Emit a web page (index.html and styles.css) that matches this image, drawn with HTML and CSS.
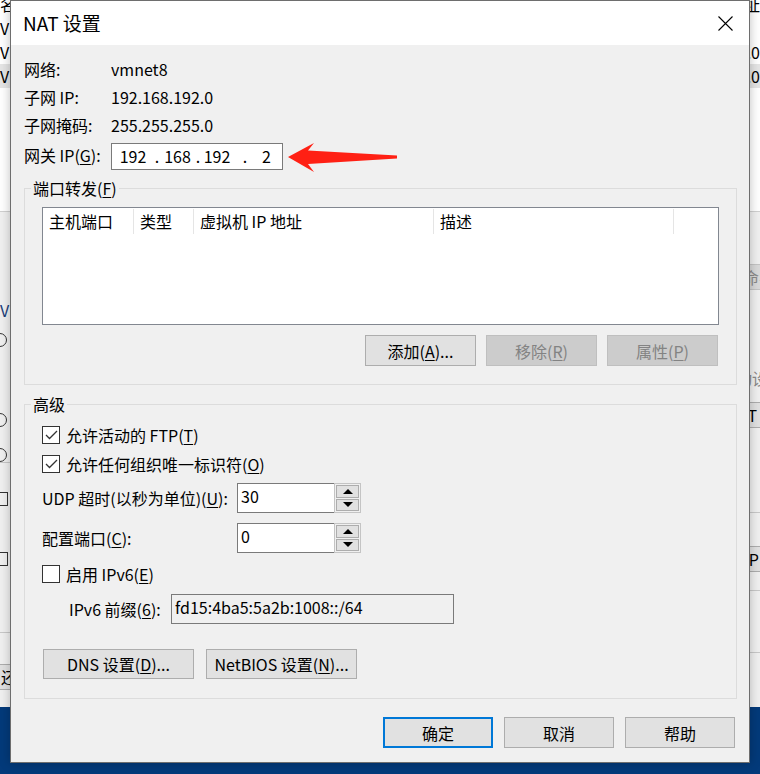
FILE: index.html
```html
<!DOCTYPE html>
<html>
  <head>
    <meta charset="UTF-8" />
    <title>NAT 设置</title>
    <link rel="stylesheet" href="styles.css">
  </head>
  <body>
    <div class="desktop">
      <!-- the network editor window behind, only its edges show -->
      <div class="strip strip-left">
        <div class="strip-in">
          <div class="bw-top">
            <div class="bw-list">
              <div class="bw-row">名称</div>
              <div class="bw-row">VMnet0</div>
              <div class="bw-row">VMnet1</div>
              <div class="bw-row sel">VMnet8</div>
            </div>
          </div>
          <div class="bw-bottom">
            <div class="bw-text bw-vm">VMnet</div>
            <div class="bw-radio r1"></div>
            <div class="bw-radio r2"></div>
            <div class="bw-radio r3"></div>
            <div class="bw-box b1"></div>
            <div class="bw-box b2"></div>
            <div class="bw-line l1"></div>
            <div class="bw-line l2"></div>
            <div class="bw-btn restore">还原</div>
          </div>
        </div>
      </div>
      <div class="strip strip-right">
        <div class="strip-in">
          <div class="bw-top">
            <div class="bw-list right">
              <div class="bw-row">地址</div>
              <div class="bw-row"></div>
              <div class="bw-row">10.0</div>
              <div class="bw-row sel">92.0</div>
            </div>
          </div>
          <div class="bw-bottom">
            <div class="bw-btn rename">重命名</div>
            <div class="bw-text auto">自动设</div>
            <div class="bw-btn nat">NAT</div>
            <div class="bw-line l3"></div>
            <div class="bw-btn dhcp">DHCP</div>
            <div class="bw-line l4"></div>
            <div class="bw-line l5"></div>
          </div>
        </div>
      </div>
      <div class="taskbar"></div>

      <div class="dialog">
        <div class="titlebar">
          <span class="title">NAT 设置</span>
          <svg class="close" width="15" height="15" viewBox="0 0 15 15">
            <path d="M0.5 0.5 L14.5 14.5 M14.5 0.5 L0.5 14.5" stroke="#000" stroke-width="1.1" fill="none" />
          </svg>
        </div>

        <div class="content">
          <div class="info-row"><span class="info-label">网络:</span><span>vmnet8</span></div>
          <div class="info-row"><span class="info-label">子网 IP:</span><span>192.168.192.0</span></div>
          <div class="info-row"><span class="info-label">子网掩码:</span><span>255.255.255.0</span></div>
          <div class="info-row gw-row">
            <span class="info-label">网关 IP(<u>G</u>):</span>
            <div class="ip-box">
              <span class="oct o1">192</span><span class="dot d1">.</span>
              <span class="oct o2">168</span><span class="dot d2">.</span>
              <span class="oct o3">192</span><span class="dot d3">.</span>
              <span class="oct o4">2</span>
            </div>
          </div>

          <fieldset class="group ports">
            <legend>端口转发(<u>F</u>)</legend>
            <div class="group-body">
              <div class="listview">
                <div class="lv-head">
                  <span class="lv-col c1">主机端口</span>
                  <span class="lv-col c2">类型</span>
                  <span class="lv-col c3">虚拟机 IP 地址</span>
                  <span class="lv-col c4">描述</span>
                </div>
              </div>
              <div class="btn-row">
                <button class="btn">添加(<u>A</u>)...</button>
                <button class="btn" disabled>移除(<u>R</u>)</button>
                <button class="btn" disabled>属性(<u>P</u>)</button>
              </div>
            </div>
          </fieldset>

          <fieldset class="group adv">
            <legend>高级</legend>
            <div class="group-body">
              <div class="check-row first">
                <span class="cb checked">
                  <svg width="16" height="16" viewBox="0 0 16 16"><polyline points="3,8 6.5,11.5 14,4" fill="none" stroke="#333" stroke-width="1.3" /></svg>
                </span>
                <span>允许活动的 FTP(<u>T</u>)</span>
              </div>
              <div class="check-row">
                <span class="cb checked">
                  <svg width="16" height="16" viewBox="0 0 16 16"><polyline points="3,8 6.5,11.5 14,4" fill="none" stroke="#333" stroke-width="1.3" /></svg>
                </span>
                <span>允许任何组织唯一标识符(<u>O</u>)</span>
              </div>
              <div class="spin-row udp">
                <span class="spin-label">UDP 超时(以秒为单位)(<u>U</u>):</span>
                <div class="spin">
                  <div class="spin-field">30</div>
                  <div class="spin-btns">
                    <span class="spin-btn"><i class="tri up"></i></span>
                    <span class="spin-btn"><i class="tri down"></i></span>
                  </div>
                </div>
              </div>
              <div class="spin-row port">
                <span class="spin-label">配置端口(<u>C</u>):</span>
                <div class="spin">
                  <div class="spin-field">0</div>
                  <div class="spin-btns">
                    <span class="spin-btn"><i class="tri up"></i></span>
                    <span class="spin-btn"><i class="tri down"></i></span>
                  </div>
                </div>
              </div>
              <div class="check-row ipv6">
                <span class="cb"></span>
                <span>启用 IPv6(<u>E</u>)</span>
              </div>
              <div class="prefix-row">
                <span class="prefix-label">IPv6 前缀(<u>6</u>):</span>
                <div class="prefix-field">fd15:4ba5:5a2b:1008::/64</div>
              </div>
              <div class="wide-row">
                <button class="btn wide">DNS 设置(<u>D</u>)...</button>
                <button class="btn wide">NetBIOS 设置(<u>N</u>)...</button>
              </div>
            </div>
          </fieldset>

          <div class="footer">
            <button class="btn default">确定</button>
            <button class="btn">取消</button>
            <button class="btn">帮助</button>
          </div>
        </div>

        <!-- annotation arrow pointing at the gateway field -->
        <svg class="arrow" width="120" height="40" viewBox="0 0 120 40">
          <path d="M2 16 L28 2 L22 9.5 L111 14.5 L111 17.5 L22 23 L28 31 Z" fill="#ff2014" />
        </svg>
      </div>
    </div>
  </body>
</html>
```

FILE: styles.css
```css
* {
  box-sizing: border-box;
}
body {
  margin: 0;
  font-family: "Noto Sans CJK SC", "Noto Sans", sans-serif;
  font-size: 16px;
  color: #000;
}
u {
  text-decoration-thickness: 1px;
  text-underline-offset: 2px;
}
.desktop {
  position: relative;
  width: 760px;
  height: 774px;
  overflow: hidden;
  background: #f0f0f0;
}

/* edges of the window behind the dialog */
.strip {
  position: absolute;
  top: 0;
  width: 10px;
  height: 707px;
  overflow: hidden;
  background: #f0f0f0;
}
.strip-left {
  left: 0;
}
.strip-right {
  right: 0;
}
.strip-in {
  position: absolute;
  top: 0;
  right: 0;
  width: 60px;
  height: 707px;
  display: flex;
  flex-direction: column;
}
.bw-top {
  height: 212px;
  flex: none;
  background: #fff;
  border-bottom: 1px solid #d0d0d0;
  overflow: hidden;
}
.bw-list {
  margin-top: -8px;
  padding-left: 50px;
}
.bw-list.right {
  padding-left: 0;
  text-align: right;
}
.bw-row {
  height: 24px;
  line-height: 24px;
  white-space: nowrap;
}
.bw-row.sel {
  background: #e5e5e5;
}
.bw-bottom {
  flex: 1;
  position: relative;
}
.bw-text {
  position: absolute;
  white-space: nowrap;
}
.bw-vm {
  left: 50px;
  top: 86px;
  color: #1c3e7a;
}
.bw-radio {
  position: absolute;
  left: 43px;
  width: 14px;
  height: 14px;
  border: 1px solid #333;
  border-radius: 50%;
}
.r1 { top: 121px; }
.r2 { top: 201px; }
.r3 { top: 236px; }
.bw-box {
  position: absolute;
  left: 44px;
  width: 14px;
  height: 14px;
  border: 1px solid #333;
}
.b1 { top: 280px; }
.b2 { top: 340px; }
.bw-line {
  position: absolute;
  left: 0;
  right: 0;
  height: 1px;
  background: #c8c8c8;
}
.l1 { top: 250px; }
.l2 { top: 420px; }
.l3 { top: 300px; }
.l4 { top: 378px; }
.l5 { top: 440px; }
.bw-btn {
  position: absolute;
  height: 26px;
  line-height: 24px;
  border: 1px solid #adadad;
  background: #e1e1e1;
  white-space: nowrap;
  padding: 0 6px;
}
.restore {
  left: 20px;
  top: 452px;
  padding-left: 30px;
}
.rename {
  right: -22px;
  top: 52px;
  background: #d9d9d9;
  color: #8a8a8a;
  border-color: #c4c4c4;
}
.auto {
  right: -8px;
  top: 154px;
  color: #8a8a8a;
}
.nat {
  right: -8px;
  top: 190px;
  padding-right: 10px;
}
.dhcp {
  right: -8px;
  top: 334px;
  padding-right: 8px;
}
.taskbar {
  position: absolute;
  left: 0;
  right: 0;
  bottom: 0;
  height: 67px;
  background: #033a7a;
}

/* dialog window */
.dialog {
  position: absolute;
  left: 10px;
  top: 0;
  width: 740px;
  height: 763px;
  border: 1px solid #6e6e6e;
  background: #f0f0f0;
  box-shadow: 0 0 10px rgba(0, 0, 0, 0.25);
  display: flex;
  flex-direction: column;
}
.titlebar {
  height: 44px;
  flex: none;
  background: #fff;
  display: flex;
  align-items: center;
  justify-content: space-between;
  padding: 0 16px 0 12px;
}
.title {
  font-size: 19px;
  line-height: 44px;
}
.close {
  display: block;
  margin-top: 1px;
}
.content {
  padding: 10px 12px 0 13px;
}
.info-row {
  display: flex;
  height: 28px;
  line-height: 28px;
}
.info-label {
  width: 87px;
}
.gw-row {
  margin-top: 4px;
  height: 27px;
  line-height: 25px;
}
.ip-box {
  width: 172px;
  height: 27px;
  border: 1px solid #7a7a7a;
  background: #fff;
  display: flex;
}
.oct,
.dot {
  text-align: center;
}
.o1 { width: 42px; }
.d1 { width: 6px; }
.o2 { width: 35px; }
.d2 { width: 6px; }
.o3 { width: 32px; }
.d3 { width: 24px; }
.o4 { width: 19px; }

/* group boxes */
.group {
  margin: 0;
  padding: 0;
  min-width: 0;
  border: 1px solid #dcdcdc;
}
.group legend {
  margin-left: 6px;
  padding: 0 2px;
  height: 20px;
  line-height: 20px;
}
.ports {
  margin-top: 8px;
}
.ports .group-body {
  padding: 9px 17px 18px;
}
.listview {
  height: 118px;
  border: 1px solid #828790;
  background: #fff;
}
.lv-head {
  display: flex;
  height: 27px;
  padding-top: 1px;
}
.lv-col {
  height: 25px;
  line-height: 25px;
  padding-left: 6px;
  border-right: 1px solid #e5e5e5;
  white-space: nowrap;
}
.c1 { width: 91px; }
.c2 { width: 60px; }
.c3 { width: 240px; }
.c4 { width: 240px; }
.btn-row {
  display: flex;
  justify-content: flex-end;
  gap: 10px;
  margin-top: 10px;
  padding-right: 1px;
}
.btn {
  width: 111px;
  height: 31px;
  margin: 0;
  padding: 0;
  border: 1px solid #adadad;
  background: #e1e1e1;
  font: inherit;
  line-height: 28px;
  color: #000;
}
.btn:disabled {
  background: #cccccc;
  border-color: #bfbfbf;
  color: #838383;
}
.btn.default {
  border: 2px solid #0078d7;
}

.adv {
  margin-top: 9px;
}
.adv .group-body {
  padding: 0 17px 19px;
  display: flex;
  flex-direction: column;
}
.check-row {
  display: flex;
  align-items: center;
  gap: 6px;
  height: 29px;
}
.check-row.first {
  margin-top: 6px;
}
.check-row.ipv6 {
  margin-top: 7px;
  height: 28px;
}
.cb {
  width: 18px;
  height: 18px;
  border: 1px solid #333;
  background: #fff;
  display: flex;
}
.cb svg {
  display: block;
}
.spin-row {
  display: flex;
  align-items: center;
  height: 30px;
}
.spin-row.udp {
  margin-top: 5px;
}
.spin-row.port {
  margin-top: 10px;
}
.spin-label {
  width: 195px;
  white-space: nowrap;
}
.spin {
  display: flex;
  height: 30px;
}
.spin-field {
  width: 97px;
  border: 1px solid #7a7a7a;
  border-right: none;
  background: #fff;
  padding-left: 3px;
  line-height: 25px;
}
.spin-btns {
  width: 27px;
  border: 1px solid #c4c4c4;
  background: #f0f0f0;
  padding: 1px;
  display: flex;
  flex-direction: column;
  gap: 1px;
}
.spin-btn {
  flex: 1;
  border: 1px solid #adadad;
  background: #e1e1e1;
  display: flex;
  align-items: center;
  justify-content: center;
}
.tri {
  width: 0;
  height: 0;
  border-left: 5px solid transparent;
  border-right: 5px solid transparent;
}
.tri.up {
  border-bottom: 5px solid #000;
}
.tri.down {
  border-top: 5px solid #000;
}
.prefix-row {
  display: flex;
  align-items: center;
  height: 30px;
  margin-top: 6px;
  padding-left: 27px;
}
.prefix-label {
  width: 102px;
  white-space: nowrap;
}
.prefix-field {
  width: 283px;
  height: 30px;
  border: 1px solid #7a7a7a;
  background: #f0f0f0;
  padding-left: 3px;
  line-height: 25px;
}
.wide-row {
  display: flex;
  gap: 12px;
  margin-top: 25px;
  padding-left: 1px;
}
.btn.wide {
  width: 151px;
  height: 30px;
}
.footer {
  display: flex;
  justify-content: flex-end;
  gap: 11px;
  margin-top: 18px;
  padding-right: 2px;
}
.footer .btn {
  width: 110px;
}
.arrow {
  position: absolute;
  left: 275px;
  top: 140px;
}
```
